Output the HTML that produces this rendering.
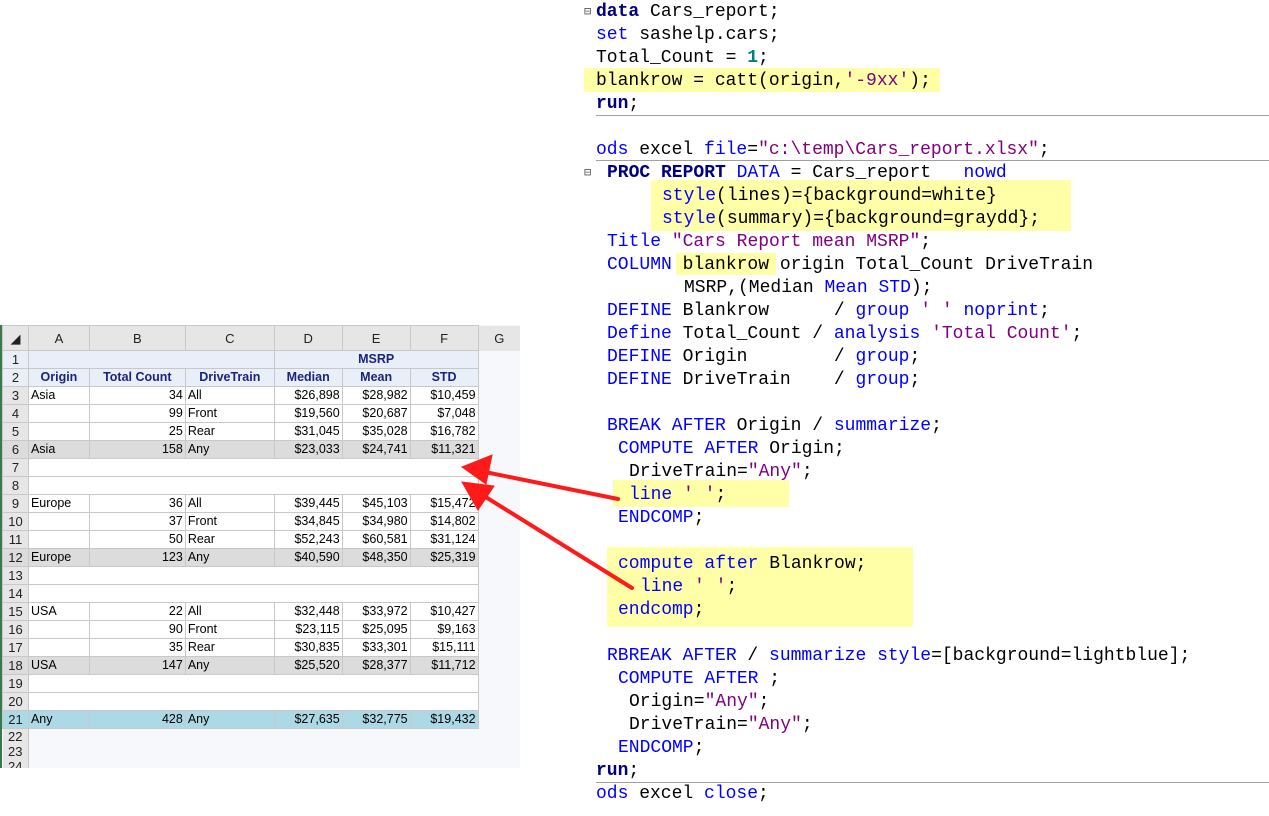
<!DOCTYPE html>
<html><head><meta charset="utf-8"><style>
body{margin:0;width:1269px;height:816px;background:#fff;position:relative;overflow:hidden;font-family:"Liberation Sans",sans-serif}
.c{position:absolute;font-family:"Liberation Mono",monospace;font-size:18px;line-height:23px;height:23px;white-space:pre;color:#000;margin-top:1px}
.k{color:#000080;font-weight:bold}.b{color:#0000ff}.p{color:#800080}
.h{position:absolute;background:#ffffa8}
.sep{position:absolute;height:1px;background:#a0a0a0;left:596px;right:0}
.ss{position:absolute;left:0;top:325px;width:520px;height:443px;background:#f7f8fc;border-left:2px solid #3a7a4a;box-sizing:border-box;overflow:hidden}
table{position:absolute;left:0;top:0;border-collapse:collapse;font-size:12.5px;table-layout:fixed}
td{border:1px solid #c8c8c8;height:17px;padding:0 2px;white-space:nowrap;overflow:hidden;background:#fff;line-height:17px}
tr.hd td{background:#e6e6e6;text-align:center;height:24px;font-size:13px;color:#222}
td.n{background:#e6e6e6;text-align:center;font-size:13px;color:#222;padding:0}
td.r{text-align:right}
tr.t td{background:#e9eff8;color:#1a237e;font-weight:bold;text-align:center}
tr.g td{background:#dcdcdc}
tr.l td{background:#add8e6}
tr.x td{border:none;background:transparent;height:15px;line-height:15px}
tr.x td.n{background:#e6e6e6;border-right:1px solid #c8c8c8}
</style></head><body>

<div class="h" style="left:584px;top:68px;width:356px;height:24px"></div>
<div class="h" style="left:651px;top:180px;width:420px;height:51px"></div>
<div class="h" style="left:676px;top:253px;width:100px;height:22px"></div>
<div class="h" style="left:613px;top:480px;width:176px;height:27px"></div>
<div class="h" style="left:607px;top:547px;width:306px;height:80px"></div>

<div class="c" style="left:584px;top:0px;font-size:12px;color:#555">⊟</div>
<div class="c" style="left:596px;top:0px"><span class="k">data</span> Cars_report;</div>
<div class="c" style="left:596px;top:23px"><span class="b">set</span> sashelp.cars;</div>
<div class="c" style="left:596px;top:46px">Total_Count = <span style="color:#008080;font-weight:bold">1</span>;</div>
<div class="c" style="left:596px;top:69px">blankrow = catt(origin,<span class="p">'-9xx'</span>);</div>
<div class="c" style="left:596px;top:92px"><span class="k">run</span>;</div>
<div class="sep" style="top:115px"></div>
<div class="c" style="left:596px;top:138px"><span class="b">ods</span> excel <span class="b">file</span>=<span class="p">"c:\temp\Cars_report.xlsx"</span>;</div>
<div class="sep" style="top:160px"></div>
<div class="c" style="left:584px;top:161px;font-size:12px;color:#555">⊟</div>
<div class="c" style="left:607px;top:161px"><span class="k">PROC REPORT</span> <span class="b">DATA</span> = Cars_report   <span class="b">nowd</span></div>
<div class="c" style="left:662px;top:184px"><span class="b">style</span>(lines)={background=white}</div>
<div class="c" style="left:662px;top:207px"><span class="b">style</span>(summary)={background=graydd};</div>
<div class="c" style="left:607px;top:230px"><span class="b">Title</span> <span class="p">"Cars Report mean MSRP"</span>;</div>
<div class="c" style="left:607px;top:253px"><span class="b">COLUMN</span> blankrow origin Total_Count DriveTrain</div>
<div class="c" style="left:684px;top:276px">MSRP,(Median <span class="b">Mean</span> <span class="b">STD</span>);</div>
<div class="c" style="left:607px;top:299px"><span class="b">DEFINE</span> Blankrow      / <span class="b">group</span> <span class="p">' '</span> <span class="b">noprint</span>;</div>
<div class="c" style="left:607px;top:322px"><span class="b">Define</span> Total_Count / <span class="b">analysis</span> <span class="p">'Total Count'</span>;</div>
<div class="c" style="left:607px;top:345px"><span class="b">DEFINE</span> Origin        / <span class="b">group</span>;</div>
<div class="c" style="left:607px;top:368px"><span class="b">DEFINE</span> DriveTrain    / <span class="b">group</span>;</div>
<div class="c" style="left:607px;top:414px"><span class="b">BREAK AFTER</span> Origin / <span class="b">summarize</span>;</div>
<div class="c" style="left:618px;top:437px"><span class="b">COMPUTE AFTER</span> Origin;</div>
<div class="c" style="left:629px;top:460px">DriveTrain=<span class="p">"Any"</span>;</div>
<div class="c" style="left:629px;top:483px"><span class="b">line</span> <span class="p">' '</span>;</div>
<div class="c" style="left:618px;top:506px"><span class="b">ENDCOMP</span>;</div>
<div class="c" style="left:618px;top:552px"><span class="b">compute after</span> Blankrow;</div>
<div class="c" style="left:640px;top:575px"><span class="b">line</span> <span class="p">' '</span>;</div>
<div class="c" style="left:618px;top:598px"><span class="b">endcomp</span>;</div>
<div class="c" style="left:607px;top:644px"><span class="b">RBREAK AFTER</span> / <span class="b">summarize</span> <span class="b">style</span>=[background=lightblue];</div>
<div class="c" style="left:618px;top:667px"><span class="b">COMPUTE AFTER</span> ;</div>
<div class="c" style="left:629px;top:690px">Origin=<span class="p">"Any"</span>;</div>
<div class="c" style="left:629px;top:713px">DriveTrain=<span class="p">"Any"</span>;</div>
<div class="c" style="left:618px;top:736px"><span class="b">ENDCOMP</span>;</div>
<div class="c" style="left:596px;top:759px"><span class="k">run</span>;</div>
<div class="sep" style="top:782px"></div>
<div class="c" style="left:596px;top:782px"><span class="b">ods</span> excel <span class="b">close</span>;</div>

<div class="ss">
<table>
<colgroup><col style="width:26px"><col style="width:61px"><col style="width:96px"><col style="width:89px"><col style="width:68px"><col style="width:68px"><col style="width:68px"><col style="width:42px"></colgroup>
<tr class="hd"><td>◢</td><td>A</td><td>B</td><td>C</td><td>D</td><td>E</td><td>F</td><td style="border:none;background:#e6e6e6">G</td></tr>
<tr class="t"><td class="n" style="font-weight:normal;color:#222">1</td><td colspan="3"></td><td colspan="3">MSRP</td><td style="border:none;background:transparent"></td></tr>
<tr class="t"><td class="n" style="font-weight:normal;color:#222">2</td><td>Origin</td><td>Total Count</td><td>DriveTrain</td><td>Median</td><td>Mean</td><td>STD</td><td style="border:none;background:transparent"></td></tr>
<tr><td class="n">3</td><td>Asia</td><td class="r">34</td><td>All</td><td class="r">$26,898</td><td class="r">$28,982</td><td class="r">$10,459</td><td style="border:none;background:transparent"></td></tr>
<tr><td class="n">4</td><td></td><td class="r">99</td><td>Front</td><td class="r">$19,560</td><td class="r">$20,687</td><td class="r">$7,048</td><td style="border:none;background:transparent"></td></tr>
<tr><td class="n">5</td><td></td><td class="r">25</td><td>Rear</td><td class="r">$31,045</td><td class="r">$35,028</td><td class="r">$16,782</td><td style="border:none;background:transparent"></td></tr>
<tr class="g"><td class="n">6</td><td>Asia</td><td class="r">158</td><td>Any</td><td class="r">$23,033</td><td class="r">$24,741</td><td class="r">$11,321</td><td style="border:none;background:transparent"></td></tr>
<tr><td class="n">7</td><td colspan="6"></td><td style="border:none;background:transparent"></td></tr>
<tr><td class="n">8</td><td colspan="6"></td><td style="border:none;background:transparent"></td></tr>
<tr><td class="n">9</td><td>Europe</td><td class="r">36</td><td>All</td><td class="r">$39,445</td><td class="r">$45,103</td><td class="r">$15,472</td><td style="border:none;background:transparent"></td></tr>
<tr><td class="n">10</td><td></td><td class="r">37</td><td>Front</td><td class="r">$34,845</td><td class="r">$34,980</td><td class="r">$14,802</td><td style="border:none;background:transparent"></td></tr>
<tr><td class="n">11</td><td></td><td class="r">50</td><td>Rear</td><td class="r">$52,243</td><td class="r">$60,581</td><td class="r">$31,124</td><td style="border:none;background:transparent"></td></tr>
<tr class="g"><td class="n">12</td><td>Europe</td><td class="r">123</td><td>Any</td><td class="r">$40,590</td><td class="r">$48,350</td><td class="r">$25,319</td><td style="border:none;background:transparent"></td></tr>
<tr><td class="n">13</td><td colspan="6"></td><td style="border:none;background:transparent"></td></tr>
<tr><td class="n">14</td><td colspan="6"></td><td style="border:none;background:transparent"></td></tr>
<tr><td class="n">15</td><td>USA</td><td class="r">22</td><td>All</td><td class="r">$32,448</td><td class="r">$33,972</td><td class="r">$10,427</td><td style="border:none;background:transparent"></td></tr>
<tr><td class="n">16</td><td></td><td class="r">90</td><td>Front</td><td class="r">$23,115</td><td class="r">$25,095</td><td class="r">$9,163</td><td style="border:none;background:transparent"></td></tr>
<tr><td class="n">17</td><td></td><td class="r">35</td><td>Rear</td><td class="r">$30,835</td><td class="r">$33,301</td><td class="r">$15,111</td><td style="border:none;background:transparent"></td></tr>
<tr class="g"><td class="n">18</td><td>USA</td><td class="r">147</td><td>Any</td><td class="r">$25,520</td><td class="r">$28,377</td><td class="r">$11,712</td><td style="border:none;background:transparent"></td></tr>
<tr><td class="n">19</td><td colspan="6"></td><td style="border:none;background:transparent"></td></tr>
<tr><td class="n">20</td><td colspan="6"></td><td style="border:none;background:transparent"></td></tr>
<tr class="l"><td class="n">21</td><td>Any</td><td class="r">428</td><td>Any</td><td class="r">$27,635</td><td class="r">$32,775</td><td class="r">$19,432</td><td style="border:none;background:transparent"></td></tr>
<tr class="x"><td class="n">22</td><td colspan="7"></td></tr>
<tr class="x"><td class="n">23</td><td colspan="7"></td></tr>
<tr class="x"><td class="n">24</td><td colspan="7"></td></tr>
</table>
</div>

<svg style="position:absolute;left:0;top:0" width="1269" height="816">
<g stroke="#ff1a1a" stroke-width="4" fill="#ff1a1a" stroke-linecap="round">
<line x1="618" y1="499" x2="480" y2="471"/>
<polygon points="462,467 492,455 486,484" stroke-width="1"/>
<line x1="632" y1="588" x2="476" y2="491"/>
<polygon points="462,482 494,486 478,510" stroke-width="1"/>
</g>
</svg>
</body></html>
